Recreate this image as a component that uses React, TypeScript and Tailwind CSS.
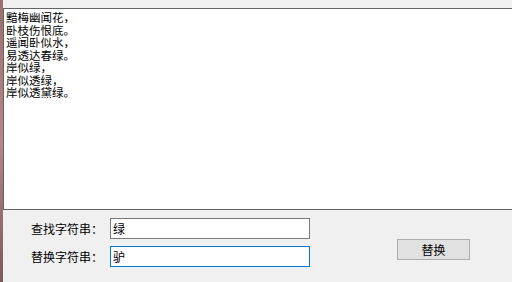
import React from "react";

const lines = [
  "黯梅幽闻花，",
  "卧枝伤恨底。",
  "遥闻卧似水，",
  "易透达春绿。",
  "岸似绿，",
  "岸似透绿，",
  "岸似透黛绿。",
];

const cjk = { fontFamily: '"Noto Sans CJK SC", "Noto Sans", sans-serif' };

export default function App() {
  return (
    <div className="flex h-[282px] w-[512px] overflow-hidden bg-[#f0f0f0]" style={cjk}>
      {/* desktop peeking through on the left */}
      <div className="w-[3px] bg-gradient-to-b from-[#9a6e6e] via-[#b88686] to-[#7a5a5a]" />

      <div className="flex flex-1 flex-col">
        <div className="h-[8px] bg-[#f0f0f0]" />

        {/* text box */}
        <div className="h-[202px] border-y border-l border-[#646464] bg-white pl-[2px] pt-[2px]">
          {lines.map((l, i) => (
            <div key={i} className="text-[11.5px] leading-[12.5px] text-black">
              {l}
            </div>
          ))}
        </div>

        {/* find / replace panel */}
        <div className="flex flex-1 pl-[28px] pt-[8px]">
          <div className="flex flex-col gap-[7px]">
            <div className="flex items-center">
              <span className="w-[79px] text-[12px] text-black">查找字符串：</span>
              <div className="flex h-[21px] w-[200px] items-center border border-[#7a7a7a] bg-white pl-[2px] text-[12px] text-black">
                绿
              </div>
            </div>
            <div className="flex items-center">
              <span className="w-[79px] text-[12px] text-black">替换字符串：</span>
              <div className="flex h-[21px] w-[200px] items-center border border-[#0078d7] bg-white pl-[2px] text-[12px] text-black">
                驴
              </div>
            </div>
          </div>
          <button className="ml-[87px] mt-[21px] h-[21px] w-[73px] border border-[#adadad] bg-[#e1e1e1] text-[12px] leading-none text-black">
            替换
          </button>
        </div>
      </div>
    </div>
  );
}
